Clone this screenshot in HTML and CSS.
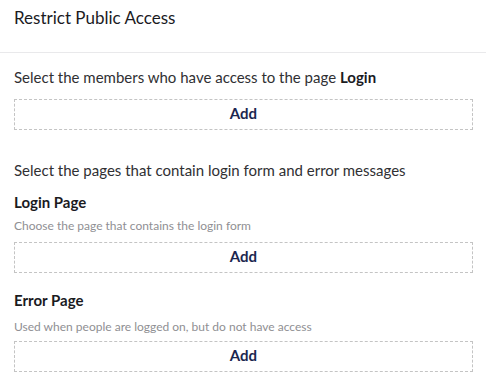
FILE: index.html
```html
<!DOCTYPE html>
<html>
<head>
    <meta charset="utf-8">
    <title>Restrict Public Access</title>
    <link rel="stylesheet" href="styles.css">
</head>
<body>
    <div class="panel">
        <div class="panel-head">
            <h4 class="panel-title">Restrict Public Access</h4>
        </div>
        <div class="panel-body">
            <div class="group">
                <p class="lead">Select the members who have access to the page <strong>Login</strong></p>
                <button class="add-btn" type="button">Add</button>
            </div>
            <div class="group group-pages">
                <p class="lead">Select the pages that contain login form and error messages</p>
                <div class="field">
                    <label class="field-label">Login Page</label>
                    <small class="field-desc">Choose the page that contains the login form</small>
                    <button class="add-btn" type="button">Add</button>
                </div>
                <div class="field field-error">
                    <label class="field-label">Error Page</label>
                    <small class="field-desc">Used when people are logged on, but do not have access</small>
                    <button class="add-btn" type="button">Add</button>
                </div>
            </div>
        </div>
    </div>
</body>
</html>
```

FILE: styles.css
```css
html, body { margin: 0; padding: 0; background: #fff; }
body { font-family: Lato, "Open Sans", sans-serif; font-size: 15px; line-height: 20px; color: #303033; }
.panel { width: 486px; }
.panel-head { height: 53px; border-bottom: 1px solid #e9e9eb; padding: 8px 14px 0 14px; box-sizing: border-box; }
.panel-title { margin: 0; font-size: 17px; font-weight: normal; line-height: 20px; color: #1b1b1f; }
.panel-body { padding: 14px 13px 0 14px; }
.lead { margin: 0; }
.lead strong { font-weight: bold; color: #1b1b1f; }
.group-pages { margin-top: 30px; }
.add-btn { display: block; width: 100%; box-sizing: border-box; margin-top: 12px; padding: 3px 0 6px 0; border: 1px dashed #c4c4c4; background: #fff; font-family: inherit; font-size: 15px; line-height: 20px; font-weight: bold; color: #1b264f; text-align: center; cursor: pointer; }
.field { margin-top: 12px; }
.field-error { margin-top: 17px; }
.field-label { display: block; font-weight: bold; color: #1b1b1f; }
.field-desc { display: block; margin-top: 6px; font-size: 12px; line-height: 16px; color: #8f8f93; }
.field .add-btn { margin-top: 8px; }
.field-error .field-desc { margin-top: 9px; }
.field-error .add-btn { margin-top: 6px; }
```
